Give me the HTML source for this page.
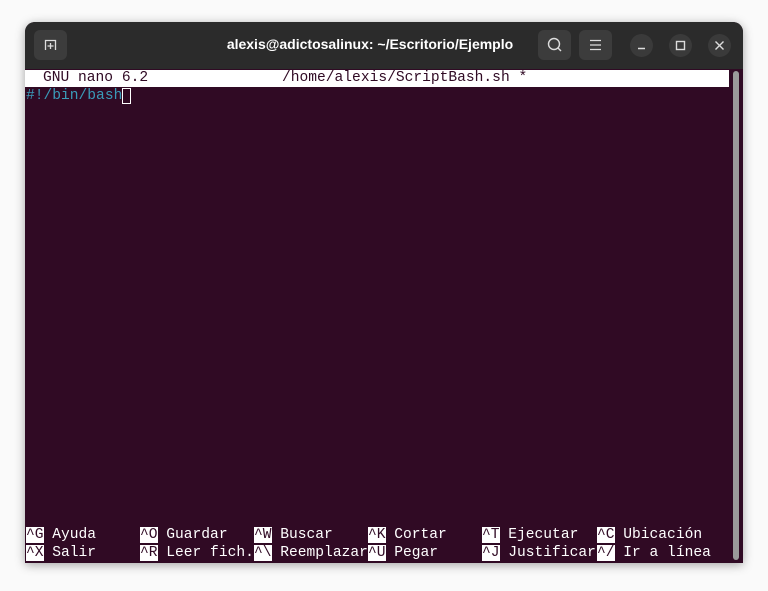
<!DOCTYPE html>
<html><head><style>
body{margin:0;width:768px;height:591px;background:#fafafa;position:relative;overflow:hidden;font-family:"Liberation Sans",sans-serif}
.win{position:absolute;left:25px;top:22px;width:718px;height:541px;border-radius:10px 10px 0 0;overflow:hidden;background:#300a24;box-shadow:0 2px 10px rgba(0,0,0,.35)}
.hdr{position:absolute;left:0;top:0;width:718px;height:47px;background:#2b2b2b}
.btn{position:absolute;top:8px;width:33px;height:30px;background:#3c3c3c;border-radius:6px}
.cb{position:absolute;top:12px;width:23px;height:23px;border-radius:50%;background:#3a3a3a}
.title{position:absolute;left:-14px;width:718px;top:14px;text-align:center;color:#fff;font-weight:bold;font-size:14px}
.t{position:absolute;font-family:"Liberation Mono",monospace;font-size:14.6px;line-height:17.6px;height:17.6px;color:#fff;white-space:pre}
.bar{position:absolute;left:0;top:48px;width:704px;height:17px;background:#fff}
.inv{background:#fff;color:#300a24}
.sb{position:absolute;left:708px;top:49px;width:6px;height:489px;background:#9a9a9a;border-radius:3px}
</style></head><body>
<div class="win">
<div class="hdr">
<div class="btn" style="left:9px"><svg width="33" height="30"><path d="M11.5 20V10.5h10V20" fill="none" stroke="#ddd" stroke-width="1.3"/><path d="M16.5 13v6M13.5 16h6" stroke="#ddd" stroke-width="1.3"/></svg></div>
<div class="title">alexis@adictosalinux: ~/Escritorio/Ejemplo</div>
<div class="btn" style="left:513px"><svg width="33" height="30"><circle cx="16" cy="14" r="5.5" fill="none" stroke="#ddd" stroke-width="1.4"/><path d="M20 18l3 3" stroke="#ddd" stroke-width="1.4"/></svg></div>
<div class="btn" style="left:554px"><svg width="33" height="30"><path d="M11 10.5h11M11 15h11M11 19.5h11" stroke="#ddd" stroke-width="1.3"/></svg></div>
<div class="cb" style="left:605px"><svg width="23" height="23"><path d="M8 14.5h7" stroke="#ddd" stroke-width="1.4"/></svg></div>
<div class="cb" style="left:644px"><svg width="23" height="23"><rect x="7.5" y="7.5" width="8" height="8" fill="none" stroke="#ddd" stroke-width="1.4"/></svg></div>
<div class="cb" style="left:683px"><svg width="23" height="23"><path d="M7.5 7.5l8 8M15.5 7.5l-8 8" stroke="#ddd" stroke-width="1.4"/></svg></div>
</div>
<div class="bar"></div>
<div class="sb"></div>
<div class="t" style="left:18px;top:48px;color:#300a24">GNU nano 6.2</div>
<div class="t" style="left:257px;top:48px;color:#300a24">/home/alexis/ScriptBash.sh *</div>
<div class="t" style="left:1px;top:66px"><span style="color:#3a9bb8">#!/bin/bash</span><span style="outline:1px solid #fff;outline-offset:-1px"> </span></div>

<div class="t" style="left:1px;top:505px"><span class="inv">^G</span> Ayuda</div>
<div class="t" style="left:115px;top:505px"><span class="inv">^O</span> Guardar</div>
<div class="t" style="left:229px;top:505px"><span class="inv">^W</span> Buscar</div>
<div class="t" style="left:343px;top:505px"><span class="inv">^K</span> Cortar</div>
<div class="t" style="left:457px;top:505px"><span class="inv">^T</span> Ejecutar</div>
<div class="t" style="left:572px;top:505px"><span class="inv">^C</span> Ubicación</div>

<div class="t" style="left:1px;top:523px"><span class="inv">^X</span> Salir</div>
<div class="t" style="left:115px;top:523px"><span class="inv">^R</span> Leer fich.</div>
<div class="t" style="left:229px;top:523px"><span class="inv">^\</span> Reemplazar</div>
<div class="t" style="left:343px;top:523px"><span class="inv">^U</span> Pegar</div>
<div class="t" style="left:457px;top:523px"><span class="inv">^J</span> Justificar</div>
<div class="t" style="left:572px;top:523px"><span class="inv">^/</span> Ir a línea</div>
</div>
</body></html>
